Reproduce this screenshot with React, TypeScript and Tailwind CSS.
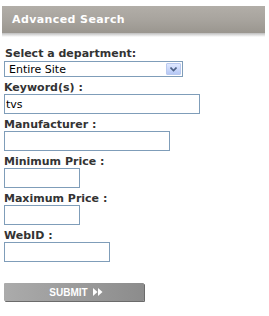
import React from 'react';

const labelCls = "block mt-[4px] leading-[13px] text-[11px] font-bold text-[#333333] [font-family:'DejaVu_Sans',Verdana,sans-serif]";
const inputCls = "block h-[20px] border border-[#7f9db9] bg-white px-[1px] text-[11px] text-black [font-family:'DejaVu_Sans',Verdana,sans-serif] outline-none";

const Field: React.FC<{ label: string; width: string; value?: string }> = ({ label, width, value }) => (
  <div>
    <label className={labelCls}>{label}</label>
    <input className={`${inputCls} ${width}`} defaultValue={value} />
  </div>
);

export default function App() {
  return (
    <div className="w-[269px] h-[316px] bg-white pt-[6px] [font-family:'DejaVu_Sans',Verdana,sans-serif]">
      <div className="mx-[2px] w-[263px]">
        <div className="h-[27px] flex items-center pl-[10px] pt-[2px] bg-gradient-to-b from-[#b2aea8] via-[#a8a49e] to-[#9a968f] text-white text-[11px] font-bold tracking-[0.4px]">
          Advanced Search
        </div>
        <div className="h-[4px] bg-gradient-to-b from-[#bdbdbd] to-white" />
      </div>

      <div className="px-[4px] pt-[10px]">
        <label className={`${labelCls} !mt-0 pl-[1px]`}>Select a department:</label>
        <div className="mt-[1px] flex items-center justify-between w-[179px] h-[16px] border border-[#7f9db9] bg-white">
          <span className="pl-[4px] text-[11px] leading-none text-black">Entire Site</span>
          <span className="mr-[1px] w-[15px] h-[12px] rounded-[1px] border border-[#b9c9ef] bg-gradient-to-b from-[#dfe8ff] to-[#b6c8f5] flex items-center justify-center">
            <svg width="7" height="5" viewBox="0 0 7 5">
              <path d="M0.5 0.5 L3.5 3.5 L6.5 0.5" fill="none" stroke="#4d6185" strokeWidth="1.6" />
            </svg>
          </span>
        </div>

        <div className="mt-[2px]">
          <Field label="Keyword(s) :" width="w-[196px]" value="tvs" />
        </div>
        <Field label="Manufacturer :" width="w-[166px]" />
        <Field label="Minimum Price :" width="w-[76px]" />
        <Field label="Maximum Price :" width="w-[76px]" />
        <Field label="WebID :" width="w-[106px]" />

        <button className="mt-[21px] w-[140px] h-[18px] flex items-center justify-center gap-[5px] bg-gradient-to-r from-[#ababab] to-[#8c8c8c] shadow-[1px_1px_0_#6b6b6b] rounded-[1px] text-white text-[10px] font-bold [font-family:'Liberation_Sans',Arial,sans-serif]">
          <span className="pl-[4px]">SUBMIT</span>
          <svg width="10" height="8" viewBox="0 0 10 8">
            <path d="M0 0 L4.5 4 L0 8 Z M5 0 L9.5 4 L5 8 Z" fill="white" />
          </svg>
        </button>
      </div>
    </div>
  );
}
